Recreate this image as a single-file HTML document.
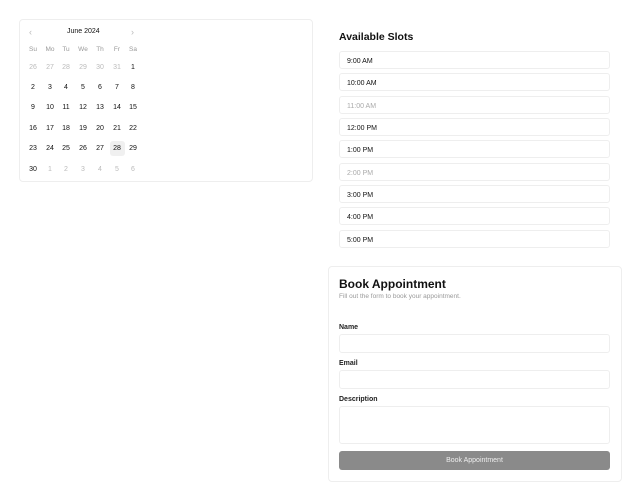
<!DOCTYPE html>
<html><head><style>
*{box-sizing:border-box;margin:0;padding:0}
body{width:640px;height:500px;background:#fff;font-family:"Liberation Sans",sans-serif;color:#111;position:relative;overflow:hidden}
.a{position:absolute}
.card{position:absolute;border:1px solid #eee;border-radius:4px}
.c{position:absolute;width:14px;text-align:center;font-size:7px;line-height:10px;transform:translateX(-7px)}
.g{color:#bbb}
.h{color:#999;font-size:6.5px}
.slot{position:absolute;left:339px;width:271px;height:18px;border:1px solid #eee;border-radius:3px;font-size:7px;line-height:19px;padding-left:7px;color:#111}
.lab{position:absolute;left:339px;font-size:7px;font-weight:bold;color:#222}
.inp{position:absolute;left:339px;width:271px;border:1px solid #eee;border-radius:3px}
</style></head><body>
<div class="card" style="left:19px;top:19px;width:294px;height:163px"></div>
<div class="a" style="left:29px;top:27px;font-size:9px;color:#bbb">‹</div>
<div class="a" style="left:131px;top:27px;font-size:9px;color:#bbb">›</div>
<div class="a" style="left:67px;top:28px;font-size:7px">June 2024</div>
<div class="a" style="left:110px;top:141px;width:15px;height:15px;background:#f0f0f0;border-radius:3px"></div>
<div id="cal"></div>
<div class="a" style="left:339px;top:31px;font-size:10.5px;font-weight:bold">Available Slots</div>
<div class="slot" style="top:51px">9:00 AM</div>
<div class="slot" style="top:73px">10:00 AM</div>
<div class="slot" style="top:96px;color:#aaa">11:00 AM</div>
<div class="slot" style="top:118px">12:00 PM</div>
<div class="slot" style="top:140px">1:00 PM</div>
<div class="slot" style="top:163px;color:#aaa">2:00 PM</div>
<div class="slot" style="top:185px">3:00 PM</div>
<div class="slot" style="top:207px">4:00 PM</div>
<div class="slot" style="top:230px">5:00 PM</div>
<div class="card" style="left:328px;top:266px;width:294px;height:216px"></div>
<div class="a" style="left:339px;top:277px;font-size:12px;font-weight:bold">Book Appointment</div>
<div class="a" style="left:339px;top:293px;font-size:6.5px;color:#999">Fill out the form to book your appointment.</div>
<div class="lab" style="top:324px">Name</div>
<div class="inp" style="top:334px;height:19px"></div>
<div class="lab" style="top:360px">Email</div>
<div class="inp" style="top:370px;height:19px"></div>
<div class="lab" style="top:396px">Description</div>
<div class="inp" style="top:406px;height:38px"></div>
<div class="a" style="left:339px;top:451px;width:271px;height:19px;background:#8a8a8a;border-radius:3px;color:#eee;font-size:7px;line-height:20px;text-align:center">Book Appointment</div>
<script>
var xs=[33,50,66,83,100,117,133],ys=[63,83,103,124,144,165];
var h='';
['Su','Mo','Tu','We','Th','Fr','Sa'].forEach(function(d,i){h+='<div class="c h" style="left:'+xs[i]+'px;top:45px">'+d+'</div>';});
var days=[];[26,27,28,29,30,31].forEach(function(d){days.push([d,1]);});
for(var d=1;d<=30;d++)days.push([d,0]);
for(d=1;d<=6;d++)days.push([d,1]);
days.forEach(function(v,k){var r=Math.floor(k/7),c=k%7;h+='<div class="c'+(v[1]?' g':'')+'" style="left:'+xs[c]+'px;top:'+ys[r]+'px">'+v[0]+'</div>';});
document.getElementById('cal').innerHTML=h;
</script>
</body></html>
